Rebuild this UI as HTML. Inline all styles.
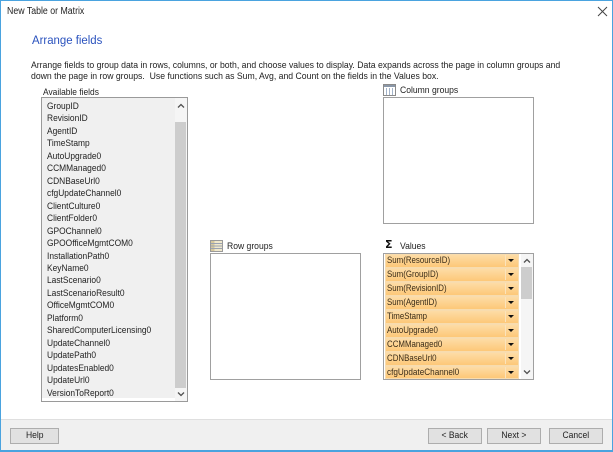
<!DOCTYPE html>
<html><head><meta charset="utf-8"><style>
html,body{margin:0;padding:0;background:#fff}
#p{position:relative;width:613px;height:452px;overflow:hidden;background:#fff;font-family:"Liberation Sans",sans-serif;font-size:9.5px;color:#222}
.a{position:absolute}
.t{position:absolute;white-space:nowrap;line-height:12px;filter:blur(.3px);transform-origin:0 0;transform:scaleX(.885)}
.h{transform:scaleX(.915)}
.box{position:absolute;background:#fff;border:1px solid #a0a0a0;box-sizing:border-box}
.btn{position:absolute;top:428px;height:16px;box-sizing:border-box;background:#e1e1e1;border:1px solid #adadad;text-align:center;line-height:14px;font-size:9.5px;color:#222}
.btn span{display:inline-block;transform:scaleX(.9);filter:blur(.3px)}
.v{position:absolute;left:385px;width:134px;height:13.5px;box-sizing:border-box;background:linear-gradient(#fddca6,#fdc878);border:1px solid #f8dcae}
.v span{position:absolute;left:1px;top:0;line-height:12px;font-size:9.5px;color:#3a2c18;white-space:nowrap;filter:blur(.3px);transform-origin:0 0;transform:scaleX(.83)}
.v i{position:absolute;left:119px;top:0;width:1px;height:11px;background:#fbe3bb}
.v b{position:absolute;left:122px;top:4px;width:0;height:0;border-left:3px solid transparent;border-right:3px solid transparent;border-top:3px solid #111}
</style></head><body><div id="p">
<div class="a" style="left:0;top:0;width:613px;height:452px;box-sizing:border-box;border:1px solid #4aa3df;border-width:1px 1px 2px 1px"></div>
<div class="t" style="left:7px;top:6px;font-size:9.8px;color:#222;transform:scaleX(.895)">New Table or Matrix</div>
<svg class="a" style="left:597px;top:6px" width="11" height="11"><path d="M1 1L10 10M10 1L1 10" stroke="#444" stroke-width="1" fill="none"/></svg>
<div class="t" style="left:32px;top:33px;font-size:12.4px;line-height:15px;color:#2a52be;transform:scaleX(.92)">Arrange fields</div>
<div class="t" style="left:31px;top:60px;transform:scaleX(.913)">Arrange fields to group data in rows, columns, or both, and choose values to display. Data expands across the page in column groups and</div>
<div class="t" style="left:31px;top:71px;transform:scaleX(.913)">down the page in row groups.&nbsp; Use functions such as Sum, Avg, and Count on the fields in the Values box.</div>
<div class="t h" style="left:43px;top:85.5px;font-size:9.2px">Available fields</div>

<div class="box" style="left:41px;top:97px;width:147px;height:305px;background:#f0f0f0;border-color:#9a9a9a;border-width:1px"></div>
<div class="a" style="left:42px;top:398px;width:145px;height:3px;background:#fff"></div>
<div class="a" style="left:175px;top:98px;width:12px;height:303px;background:#f5f5f5"></div>
<div class="a" style="left:175px;top:122px;width:11px;height:266px;background:#cdcdcd"></div>
<svg class="a" style="left:177px;top:103px" width="8" height="6"><path d="M1 4.5L4 1.5L7 4.5" stroke="#505050" stroke-width="1.3" fill="none"/></svg>
<svg class="a" style="left:177px;top:391px" width="8" height="6"><path d="M1 1.5L4 4.5L7 1.5" stroke="#505050" stroke-width="1.3" fill="none"/></svg>
<div class="t" style="left:47px;top:100.7px">GroupID</div>
<div class="t" style="left:47px;top:113.2px">RevisionID</div>
<div class="t" style="left:47px;top:125.7px">AgentID</div>
<div class="t" style="left:47px;top:138.1px">TimeStamp</div>
<div class="t" style="left:47px;top:150.6px">AutoUpgrade0</div>
<div class="t" style="left:47px;top:163.1px">CCMManaged0</div>
<div class="t" style="left:47px;top:175.6px">CDNBaseUrl0</div>
<div class="t" style="left:47px;top:188.1px">cfgUpdateChannel0</div>
<div class="t" style="left:47px;top:200.5px">ClientCulture0</div>
<div class="t" style="left:47px;top:213px">ClientFolder0</div>
<div class="t" style="left:47px;top:225.5px">GPOChannel0</div>
<div class="t" style="left:47px;top:238px">GPOOfficeMgmtCOM0</div>
<div class="t" style="left:47px;top:250.5px">InstallationPath0</div>
<div class="t" style="left:47px;top:262.9px">KeyName0</div>
<div class="t" style="left:47px;top:275.4px">LastScenario0</div>
<div class="t" style="left:47px;top:287.9px">LastScenarioResult0</div>
<div class="t" style="left:47px;top:300.4px">OfficeMgmtCOM0</div>
<div class="t" style="left:47px;top:312.9px">Platform0</div>
<div class="t" style="left:47px;top:325.3px">SharedComputerLicensing0</div>
<div class="t" style="left:47px;top:337.8px">UpdateChannel0</div>
<div class="t" style="left:47px;top:350.3px">UpdatePath0</div>
<div class="t" style="left:47px;top:362.8px">UpdatesEnabled0</div>
<div class="t" style="left:47px;top:375.3px">UpdateUrl0</div>
<div class="t" style="left:47px;top:387.7px">VersionToReport0</div>

<svg class="a" style="left:383px;top:84px" width="13" height="12"><rect x=".5" y=".5" width="12" height="11" fill="#fff" stroke="#8a8a8a"/><rect x="1" y="1" width="11" height="2" fill="#8a97a8"/><path d="M3.5 4V11M6.5 4V11M9.5 4V11" stroke="#a3b4ca" stroke-width="1"/></svg>
<div class="t h" style="left:400px;top:84px;font-size:9.4px">Column groups</div>
<div class="box" style="left:383px;top:97px;width:151px;height:127px"></div>

<svg class="a" style="left:210px;top:240px" width="13" height="12"><rect x=".5" y=".5" width="12" height="11" fill="#f0e8cc" stroke="#9a9a9a"/><rect x="1" y="1" width="3.5" height="10" fill="#d6c89c"/><path d="M1 3.5H12M1 6H12M1 8.5H12" stroke="#9aa2b2" stroke-width="1"/></svg>
<div class="t h" style="left:227px;top:240px;font-size:9.4px">Row groups</div>
<div class="box" style="left:210px;top:253px;width:151px;height:127px"></div>

<div class="t" style="left:385px;top:239px;font-size:11px;font-weight:bold;font-family:'DejaVu Sans',sans-serif;color:#111;transform:none">Σ</div>
<div class="t h" style="left:400px;top:240px;font-size:9.4px">Values</div>
<div class="box" style="left:383px;top:253px;width:151px;height:127px"></div>
<div class="a" style="left:521px;top:254px;width:12px;height:125px;background:#f5f5f5"></div>
<div class="a" style="left:521px;top:267px;width:11px;height:32px;background:#cdcdcd"></div>
<svg class="a" style="left:523px;top:258px" width="8" height="6"><path d="M1 4.5L4 1.5L7 4.5" stroke="#505050" stroke-width="1.3" fill="none"/></svg>
<svg class="a" style="left:523px;top:369px" width="8" height="6"><path d="M1 1.5L4 4.5L7 1.5" stroke="#505050" stroke-width="1.3" fill="none"/></svg>
<div class="v" style="top:254px"><span>Sum(ResourceID)</span><i></i><b></b></div>
<div class="v" style="top:268px"><span>Sum(GroupID)</span><i></i><b></b></div>
<div class="v" style="top:282px"><span>Sum(RevisionID)</span><i></i><b></b></div>
<div class="v" style="top:296px"><span>Sum(AgentID)</span><i></i><b></b></div>
<div class="v" style="top:310px"><span>TimeStamp</span><i></i><b></b></div>
<div class="v" style="top:324px"><span>AutoUpgrade0</span><i></i><b></b></div>
<div class="v" style="top:338px"><span>CCMManaged0</span><i></i><b></b></div>
<div class="v" style="top:352px"><span>CDNBaseUrl0</span><i></i><b></b></div>
<div class="v" style="top:366px;height:13px"><span style="transform:scaleX(.86)">cfgUpdateChannel0</span><i></i><b></b></div>

<div class="a" style="left:1px;top:419px;width:611px;height:31px;background:#f0f0f0;border-top:1px solid #dfdfdf;box-sizing:border-box"></div>
<div class="btn" style="left:10px;width:49px"><span>Help</span></div>
<div class="btn" style="left:428px;width:54px"><span>&lt; Back</span></div>
<div class="btn" style="left:487px;width:54px"><span>Next &gt;</span></div>
<div class="btn" style="left:549px;width:54px"><span>Cancel</span></div>
</div></body></html>
